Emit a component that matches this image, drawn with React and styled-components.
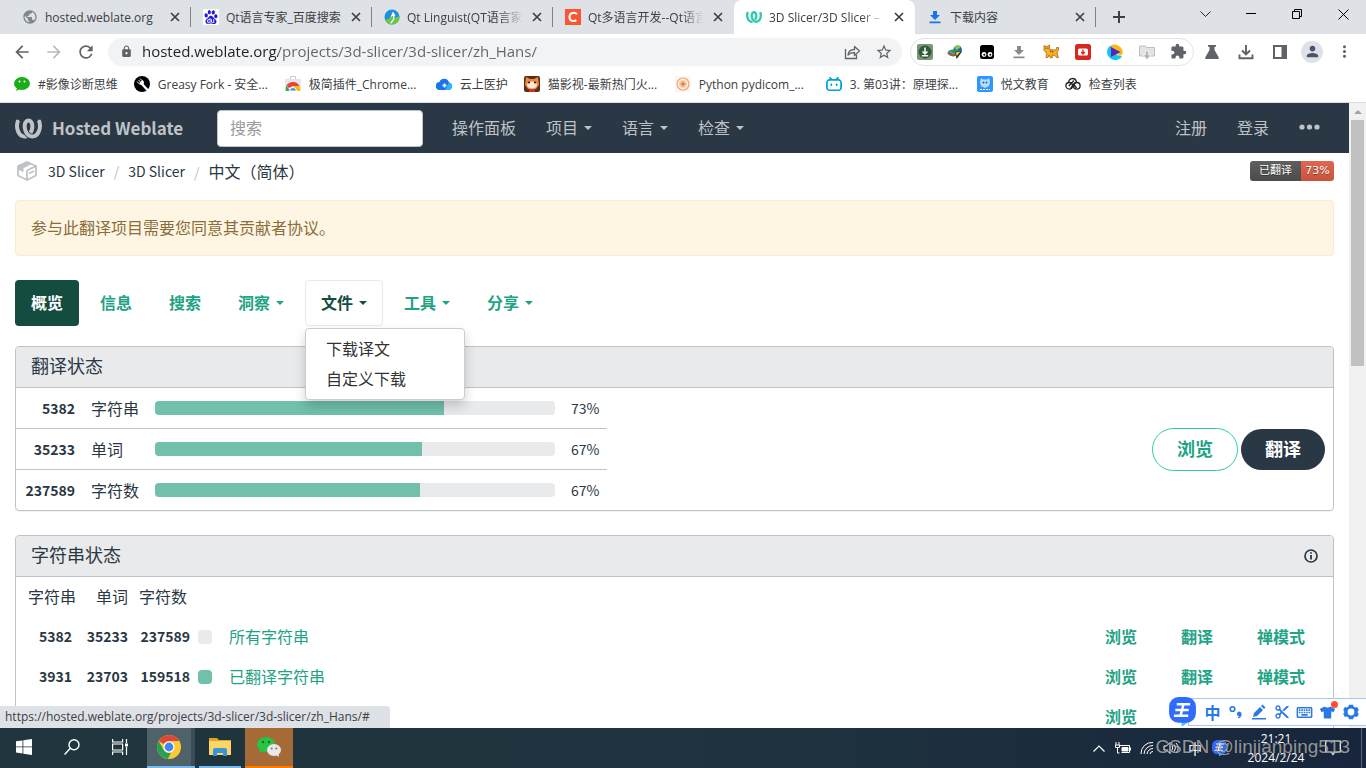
import styled, { createGlobalStyle, css } from "styled-components";
import {
  MdArrowBack,
  MdArrowForward,
  MdRefresh,
  MdLock,
  MdStarBorder,
  MdExtension,
  MdMoreVert,
  MdPerson,
  MdPublic,
  MdContentCut,
  MdOutlineKeyboard,
} from "react-icons/md";
import { FaTshirt } from "react-icons/fa";
import { SiBaidu, SiBilibili, SiWeblate } from "react-icons/si";

const GlobalStyle = createGlobalStyle`
  * {
    box-sizing: border-box;
  }
  body {
    margin: 0;
    overflow: hidden;
    font-family: "Noto Sans CJK SC", sans-serif;
    color: #2a3744;
    background: #fff;
  }
  button, input {
    font: inherit;
    color: inherit;
    border: 0;
    padding: 0;
    margin: 0;
    background: none;
  }
  button {
    cursor: pointer;
  }
  a {
    color: inherit;
    text-decoration: none;
  }
  svg {
    display: block;
    flex: none;
  }
`;

const Desktop = styled.div`
  height: 100vh;
  display: flex;
  flex-direction: column;
`;

/* ---------- browser chrome ---------- */

const Chrome = styled.header`
  font-family: "Open Sans", "Noto Sans CJK SC", sans-serif;
  font-size: 12px;
  color: #3c4043;
  border-bottom: 1px solid #d9dbde;
`;

const TabStrip = styled.div`
  height: 34px;
  padding-left: 10px;
  display: flex;
  background: #dee1e6;
`;

const Tab = styled.div`
  flex: 0 1 181px;
  min-width: 0;
  display: flex;
  align-items: center;
  padding: 0 8px 0 12px;
  position: relative;
  ${(props) =>
    props.$active
      ? css`
          background: #fff;
          border-radius: 8px 8px 0 0;
        `
      : css`
          &::after {
            content: "";
            position: absolute;
            right: 0;
            top: 7px;
            height: 20px;
            width: 1px;
            background: ${props.$last ? "transparent" : "#808387"};
          }
        `}
`;

const TabTitle = styled.button`
  flex: 1;
  min-width: 0;
  margin-left: 7px;
  text-align: left;
  white-space: nowrap;
  overflow: hidden;
  ${(props) =>
    props.$fade &&
    css`
      mask-image: linear-gradient(90deg, #000 80%, transparent);
    `}
`;

const TabClose = styled.button`
  width: 16px;
  height: 16px;
  margin-left: 6px;
  display: grid;
  place-items: center;
`;

const NewTab = styled.button`
  width: 46px;
  display: grid;
  place-items: center;
`;

const WindowButtons = styled.div`
  margin-left: auto;
  height: 28px;
  display: flex;
`;

const WindowButton = styled.button`
  width: 46px;
  display: grid;
  place-items: center;
`;

const Toolbar = styled.div`
  height: 35px;
  padding: 0 6px;
  display: flex;
  align-items: center;
  color: #5f6368;
`;

const ToolButton = styled.button`
  width: ${(props) => props.$width || 32}px;
  height: 28px;
  display: grid;
  place-items: center;
  color: ${(props) => (props.$dim ? "#b8babd" : "inherit")};
`;

const AddressBar = styled.div`
  flex: 1;
  height: 28px;
  margin: 0 8px 0 6px;
  padding: 0 2px 0 12px;
  display: flex;
  align-items: center;
  border-radius: 14px;
  background: #f1f3f4;
`;

const AddressInput = styled.input`
  flex: 1;
  min-width: 0;
  margin-left: 9px;
  height: 24px;
  padding-bottom: 1px;
  font-size: 15px;
  /* the host is darker than the path */
  color: transparent;
  background: linear-gradient(90deg, #202124 136px, #5f6368 136px);
  background-clip: text;
`;

const Extensions = styled.div`
  height: 28px;
  display: flex;
  align-items: center;
  border: 1px solid #e1e3e6;
  border-radius: 14px;
  margin-right: 2px;
  & > button {
    width: 32px;
  }
  & > button:first-child {
    width: 28px;
  }
  & > button:last-child {
    width: 30px;
  }
`;

const Avatar = styled.span`
  width: 22px;
  height: 22px;
  border-radius: 50%;
  background: #dee1e6;
  color: #47536b;
  display: grid;
  place-items: center;
`;

const Bookmarks = styled.nav`
  height: 33px;
  padding: 0 14px 3px;
  display: flex;
  align-items: center;
  gap: 16px;
`;

const Bookmark = styled.a`
  display: flex;
  align-items: center;
  gap: 8px;
  min-width: ${(props) => (props.$long ? "135px" : "0")};
  white-space: nowrap;
`;

/* ---------- page ---------- */

const Viewport = styled.div`
  flex: 1;
  min-height: 0;
  display: flex;
  position: relative;
  overflow: hidden;
`;

const Page = styled.div`
  flex: 1;
  min-width: 0;
  overflow: hidden;
  font-size: 16px;
  line-height: 24px;
`;

const Scrollbar = styled.div`
  width: 17px;
  padding: 0 2px;
  background: #f1f1f1;
`;

const ScrollArrow = styled.div`
  height: 17px;
  display: grid;
  place-items: center;
`;

const ScrollThumb = styled.div`
  height: 246px;
  background: #c1c1c1;
`;

const Navbar = styled.nav`
  height: 50px;
  padding: 0 15px;
  display: flex;
  align-items: center;
  background: #2a3744;
  color: #bfc3c7;
`;

const Brand = styled.a`
  display: flex;
  align-items: center;
  gap: 10px;
  width: 202px;
  font-size: 17px;
  font-weight: 700;
  white-space: nowrap;
`;

const SearchInput = styled.input`
  width: 206px;
  height: 37px;
  padding: 0 12px 3px;
  border: 1px solid #bfc3c7;
  border-radius: 4px;
  background: #fff;
  color: #2a3744;
  &::placeholder {
    color: #999;
    opacity: 1;
  }
`;

const NavLinks = styled.div`
  display: flex;
  align-items: center;
  gap: 30px;
  margin-left: ${(props) => (props.$right ? "auto" : "29px")};
  padding: ${(props) => (props.$right ? "0 14px 2px 0" : "0 0 2px")};
`;

const NavLink = styled.a`
  display: flex;
  align-items: center;
  white-space: nowrap;
`;

const Caret = styled.span`
  margin: 2px 0 0 6px;
  border: 4px solid transparent;
  border-top-color: currentColor;
  border-bottom: 0;
`;

const Crumbs = styled.div`
  height: 38px;
  margin: 0 15px;
  padding-bottom: 2px;
  display: flex;
  align-items: center;
`;

const CrumbList = styled.div`
  display: flex;
  align-items: center;
  margin-left: 10px;
  a + a::before {
    content: "/";
    padding: 0 9px;
    font-size: 14px;
    color: #bfc3c7;
  }
`;

const Crumb = styled.a`
  font-size: ${(props) => (props.$cjk ? 16 : 14)}px;
`;

const Badge = styled.a`
  margin-left: auto;
  height: 20px;
  display: flex;
  border-radius: 3px;
  overflow: hidden;
  font: 11px/20px "DejaVu Sans", "Noto Sans CJK SC", sans-serif;
  color: #fff;
  text-shadow: 0 1px 0 rgba(1, 1, 1, 0.4);
`;

const BadgeLabel = styled.span`
  width: 51px;
  text-align: center;
  background: linear-gradient(#5f5f5f, #4b4b4b);
`;

const BadgeValue = styled.span`
  width: 33px;
  text-align: center;
  background: linear-gradient(#e0674f, #c9533d);
`;

const Alert = styled.div`
  margin: 9px 15px 24px;
  padding: 14px 15px 16px;
  border: 1px solid #faebcc;
  border-radius: 4px;
  background: #fef6e3;
  color: #8a6d3b;
`;

const Pills = styled.div`
  margin: 0 15px 20px;
  display: flex;
  gap: 5px;
`;

const PillItem = styled.div`
  position: relative;
`;

const Pill = styled.button`
  height: 46px;
  padding: 0 15px 3px;
  display: flex;
  align-items: center;
  border: 1px solid transparent;
  border-radius: 4px;
  font-weight: 700;
  color: #1fa385;
  ${(props) =>
    props.$active &&
    css`
      background: #144d3f;
      color: #fff;
    `}
  ${(props) =>
    props.$open &&
    css`
      border-color: #e9eaec;
      color: #144d3f;
    `}
`;

const Menu = styled.div`
  position: absolute;
  z-index: 1;
  top: 100%;
  left: 0;
  margin-top: 2px;
  width: 160px;
  padding: 5px 0;
  border: 1px solid #ccc;
  border-radius: 4px;
  background: #fff;
  box-shadow: 0 6px 12px rgba(0, 0, 0, 0.18);
`;

const MenuItem = styled.a`
  display: block;
  padding: 2px 20px 4px;
  color: #333;
`;

const Panel = styled.section`
  margin: 0 15px 24px;
  border: 1px solid #bfc3c7;
  border-radius: 4px;
  box-shadow: 0 1px 1px rgba(0, 0, 0, 0.05);
`;

const PanelHeading = styled.div`
  height: 41px;
  padding: 0 15px;
  display: flex;
  align-items: center;
  justify-content: space-between;
  border-bottom: 1px solid #bfc3c7;
  border-radius: 3px 3px 0 0;
  background: #e9eaec;
`;

const PanelTitle = styled.h4`
  margin: 0;
  padding-bottom: 4px;
  font-size: 18px;
  font-weight: 400;
`;

const PanelBody = styled.div`
  display: flex;
  align-items: center;
  justify-content: space-between;
`;

const ProgressTable = styled.table`
  border-spacing: 0;
  td {
    height: 41px;
    padding: 0 8px 1px;
    white-space: nowrap;
  }
  tr:first-child td {
    height: 40px;
    padding-bottom: 0;
  }
  tr + tr td {
    border-top: 1px solid #bfc3c7;
  }
`;

const NumberCell = styled.td`
  width: 67px;
  font-size: 14px;
  font-weight: 700;
  text-align: right;
`;

const PercentCell = styled.td`
  font-size: 14px;
`;

const Progress = styled.div`
  width: 400px;
  height: 14px;
  border-radius: 4px;
  overflow: hidden;
  background: #e9eaec;
`;

const ProgressFill = styled.div`
  height: 100%;
  background: #70c0ac;
`;

const Actions = styled.div`
  display: flex;
  align-items: center;
  gap: 3px;
  padding-right: 8px;
`;

const ActionButton = styled.button`
  height: ${(props) => (props.$primary ? 41 : 43)}px;
  padding: 0 24px 3px;
  border-radius: 22px;
  font-size: 18px;
  font-weight: 700;
  ${(props) =>
    props.$primary
      ? css`
          background: #2a3744;
          color: #fff;
        `
      : css`
          border: 1px solid #2eccaa;
          color: #1fa385;
        `}
`;

const StringsTable = styled.table`
  width: 100%;
  table-layout: fixed;
  border-spacing: 0;
  th,
  td {
    height: 40px;
    padding: 0 0 2px;
    text-align: left;
    font-weight: 400;
    white-space: nowrap;
  }
  th:nth-child(-n + 3),
  td:nth-child(-n + 3) {
    text-align: right;
  }
  td:nth-child(-n + 3) {
    font-size: 14px;
    font-weight: 700;
  }
  td:first-child {
    padding-right: 4px;
  }
  th:nth-child(3) {
    padding-right: 3px;
  }
`;

const Swatch = styled.span`
  display: block;
  width: 14px;
  height: 14px;
  margin: 2px 0 0 8px;
  border-radius: 4px;
  background: ${(props) => (props.$filled ? "#70c0ac" : "#e9eaec")};
`;

const GreenLink = styled.a`
  color: #1fa385;
  font-weight: ${(props) => (props.$bold ? 700 : 400)};
`;

const StatusBubble = styled.div`
  position: absolute;
  left: 0;
  bottom: 0;
  height: 22px;
  min-width: 390px;
  padding: 0 8px 0 5px;
  border-radius: 0 4px 0 0;
  background: #dee1e6;
  color: #3c4043;
  font: 12px/22px "Open Sans", sans-serif;
`;

const ImeBar = styled.div`
  position: absolute;
  right: 0;
  bottom: 2px;
  height: 28px;
  width: 178px;
  padding-left: 12px;
  display: flex;
  align-items: center;
  border: 1px solid #a9c5f5;
  border-right: 0;
  background: #fff;
  color: #2878e6;
`;

const ImeButton = styled.button`
  width: 23px;
  display: grid;
  place-items: center;
  font-size: 16px;
  font-weight: 700;
  line-height: 20px;
  position: relative;
`;

const RedDot = styled.span`
  position: absolute;
  top: -4px;
  right: 1px;
  width: 7px;
  height: 7px;
  border-radius: 50%;
  background: #ff5030;
`;

const ImeLogo = styled.div`
  position: absolute;
  left: -20px;
  top: -2px;
`;

/* ---------- taskbar ---------- */

const Taskbar = styled.footer`
  height: 40px;
  display: flex;
  position: relative;
  background: linear-gradient(90deg, #20353e, #1f333e 55%, #18263d);
  color: #fff;
  font: 12px/19px "Open Sans", "Noto Sans CJK SC", sans-serif;
`;

const TaskApps = styled.div`
  display: flex;
  gap: 4px;
  padding-left: 3px;
`;

const TaskButton = styled.button`
  width: ${(props) => props.$width || 48}px;
  display: grid;
  place-items: center;
  background: ${(props) => props.$bg || "transparent"};
  border-bottom: 2px solid ${(props) => props.$line || "transparent"};
  ${(props) =>
    props.$stacked &&
    css`
      padding-right: 4px;
      box-shadow: inset -4px 0 #3a4d56;
    `}
`;

const Tray = styled.div`
  margin-left: auto;
  display: flex;
  align-items: center;
`;

const TrayItem = styled.button`
  width: 24px;
  height: 40px;
  display: grid;
  place-items: center;
  font-size: 14px;
`;

const Clock = styled.div`
  width: 90px;
  text-align: center;
`;

const ShowDesktop = styled.div`
  width: 5px;
  height: 40px;
  margin-left: 16px;
  border-left: 1px solid #5b6677;
`;

const Watermark = styled.div`
  position: absolute;
  right: 16px;
  top: 8px;
  font: 19px/22px "Liberation Sans", sans-serif;
  color: rgba(225, 225, 225, 0.65);
  text-shadow: 0 0 1px rgba(0, 0, 0, 0.6);
`;

/* ---------- icons ---------- */

const CloseIcon = () => (
  <svg width="10" height="10" viewBox="0 0 10 10" stroke="#3c4043" strokeWidth="1.7">
    <path d="M1 1l8 8M9 1l-8 8" />
  </svg>
);

const BaiduIcon = () => (
  <svg width="16" height="16" viewBox="0 0 16 16">
    <rect width="16" height="16" rx="1" fill="#fff" />
    <SiBaidu x="1" y="1" size={14} color="#2319dc" />
  </svg>
);

const LinguistIcon = () => (
  <svg width="16" height="16" viewBox="0 0 16 16">
    <circle cx="8" cy="8" r="7.5" fill="#1b8fe0" />
    <path d="M1 11C4 10 6 9 7 7l3 2 5.500-2c.5 5-3 8.500-7.500 8.500-3.500 0-6-2-7-4.500z" fill="#6cc644" />
    <path d="M6 14l3-4V7L6.500 8 9 2.500l2.500 4L10.500 7v3L7.500 14.500z" fill="#fff" />
  </svg>
);

const CIcon = () => (
  <svg width="16" height="16" viewBox="0 0 16 16">
    <rect width="16" height="16" fill="#fc5531" />
    <path d="M12 5.200C9.500 2.700 4.800 3.500 4.500 7.500c-.3 4.500 4.300 5.500 7 3.600" fill="none" stroke="#fff" strokeWidth="2" />
  </svg>
);

const WechatIcon = () => (
  <svg width="16" height="16" viewBox="0 0 16 16">
    <ellipse cx="8" cy="7.500" rx="8" ry="6.500" fill="#1aad19" />
    <path d="M3 12l-1 3 4-2z" fill="#1aad19" />
    <circle cx="5.500" cy="5.500" r="1" fill="#fff" />
    <circle cx="10.500" cy="5.500" r="1" fill="#fff" />
  </svg>
);

const GreasyIcon = () => (
  <svg width="16" height="16" viewBox="0 0 16 16">
    <circle cx="8" cy="8" r="8" fill="#000" />
    <path d="M8 8l5 5.500" stroke="#fff" strokeWidth="2.400" strokeLinecap="round" />
    <path d="M3 5.500l3 3M4.500 4l3 3M6 2.500l3 3" stroke="#fff" strokeWidth="1" fill="none" />
    <path d="M5 7.500l3.500-3.500 1.500 2-.5 2.500L7 9z" fill="#fff" />
  </svg>
);

const StoreIcon = () => (
  <svg width="16" height="16" viewBox="0 0 16 16">
    <path d="M5.500 3V.500h5V3" fill="none" stroke="#c9ccd0" />
    <path d="M0 3h16l-.5 12H.5z" fill="#e4e6e9" />
    <path d="M1.500 9.500A7.500 7.500 0 0 1 14.500 10H8l-4 2z" fill="#ea4335" />
    <path d="M1.500 9.500L5 15H.8c-.3-2 0-4 .7-5.500z" fill="#34a853" />
    <path d="M8.500 10h6c.7 1.500 1 3.300.7 5H9z" fill="#fbbc05" />
    <path d="M4.500 15a3.500 3.500 0 0 1 7 0z" fill="#4285f4" stroke="#fff" />
  </svg>
);

const CloudIcon = () => (
  <svg width="16" height="16" viewBox="0 0 16 16">
    <path d="M4 14a4 4 0 0 1-.5-8A5 5 0 0 1 13 6.500 3.800 3.800 0 0 1 12.500 14z" fill="#1a73e8" />
    <path d="M9 14l4-7.500a3.800 3.800 0 0 1-.5 7.500z" fill="#2fb5f5" />
    <path d="M8.500 7.500v4M6.500 9.500h4" stroke="#fff" strokeWidth="1.600" />
  </svg>
);

const CatIcon = () => (
  <svg width="16" height="16" viewBox="0 0 16 16">
    <rect width="16" height="16" rx="2" fill="#5b2c1c" />
    <path d="M2 1l4 2h4l4-2 1 8-3 4H4L1 9z" fill="#e98b47" />
    <ellipse cx="8" cy="9" rx="5" ry="3.500" fill="#ffe9cf" />
    <circle cx="5" cy="6.500" r="1.100" fill="#301a10" />
    <circle cx="11" cy="6.500" r="1.100" fill="#301a10" />
    <path d="M5 13h6v3H5z" fill="#c8362a" />
  </svg>
);

const PyIcon = () => (
  <svg width="16" height="16" viewBox="0 0 16 16">
    <rect width="16" height="16" fill="#faf6f2" />
    <circle cx="8" cy="8" r="6" fill="none" stroke="#f2a36b" strokeWidth="1.200" />
    <circle cx="8" cy="8" r="4" fill="#f8c9a4" />
    <path d="M8 5l1 2 2 1-2 1-1 2-1-2-2-1 2-1z" fill="#ec7f37" />
  </svg>
);

const YuewenIcon = () => (
  <svg width="16" height="16" viewBox="0 0 16 16">
    <rect width="16" height="16" rx="2" fill="#2d96ff" />
    <path d="M4 2l2 1.500h4L12 2l1 4-1 4-4 2-4-2-1-4z" fill="#b9defc" />
    <circle cx="6.500" cy="6.500" r="1" fill="#1560b0" />
    <circle cx="9.500" cy="6.500" r="1" fill="#1560b0" />
    <path d="M3 13.500h10" stroke="#fff" strokeDasharray="2 1" />
  </svg>
);

const ListIcon = () => (
  <svg width="16" height="16" viewBox="0 0 16 16" fill="none" stroke="#222" strokeWidth="1.300">
    <circle cx="4.200" cy="9.800" r="3.300" />
    <circle cx="11.800" cy="9.800" r="3.300" />
    <path d="M3.500 6.500C4 1.500 10.500 1 11.500 6.200M5.500 12.500l5-6M3.800 10l5-5.500M8.500 8l3 4" />
  </svg>
);

const ShareIcon = () => (
  <svg width="17" height="16" viewBox="0 0 17 16" fill="none" stroke="#5f6368" strokeWidth="1.300">
    <path d="M1.500 5v9.500h11V11" />
    <path d="M4 11c.5-4 3-5.500 6.500-5.500V2.500L15.500 7l-5 4.500v-3C8 8.500 6 9 4 11z" strokeLinejoin="round" />
  </svg>
);

const GreenSaveIcon = () => (
  <svg width="16" height="16" viewBox="0 0 16 16">
    <rect width="16" height="16" rx="2" fill="#7d9573" />
    <circle cx="8" cy="8" r="6.500" fill="#2d5b3f" />
    <path d="M8 3.500v6M5.500 7.500L8 10l2.500-2.500M4.800 11.800h6.400" stroke="#fff" strokeWidth="1.500" fill="none" />
  </svg>
);

const IdmIcon = () => (
  <svg width="16" height="14" viewBox="0 0 18 16">
    <circle cx="12" cy="5.500" r="5" fill="#2c63b6" />
    <path d="M8 3c2-3 6-3 8-1l-5 4z" fill="#7ec850" />
    <ellipse cx="7" cy="9" rx="6.500" ry="4" fill="#2f9a48" />
    <path d="M1 8l5 4 4-2" stroke="#e3372c" strokeWidth="1.500" fill="none" />
    <path d="M2 6.500l5 3.500 3-2" stroke="#4a9be8" strokeWidth="1.500" fill="none" />
    <path d="M9 7.500h8L11 16c-1-2-1-5-2-8.500z" fill="#28343c" />
    <path d="M10 8.500l5-1-4 5z" fill="#ffd928" />
  </svg>
);

const TamperIcon = () => (
  <svg width="14" height="14" viewBox="0 0 14 14">
    <rect width="14" height="14" rx="2.500" fill="#000" />
    <circle cx="4" cy="9.500" r="2.400" fill="#fff" />
    <circle cx="10" cy="9.500" r="2.400" fill="#fff" />
    <circle cx="4.300" cy="9.800" r="1" />
    <circle cx="10.300" cy="9.800" r="1" />
  </svg>
);

const BlockArrowIcon = ({ color }) => (
  <svg width="16" height="16" viewBox="0 0 16 16" fill={color}>
    <path d="M6 2h4v4h3L8 11 3 6h3zM2.500 12.500h11v1.700h-11z" />
  </svg>
);

const TigerIcon = () => (
  <svg width="16" height="16" viewBox="0 0 16 16">
    <path d="M1 1.500l1.500.8h2L6.500 1v4.500l5.500.5 1.500-1V3.500h2V6l-1.500 2 .5 3 1 2.500h-2L12 11.500l-3-.5.5 2.500-2 .5-1.500-3-1 2.500H3L3.500 9 1 6.500z" fill="#f7b21d" stroke="#a8560c" strokeWidth=".7" />
    <path d="M2.500 4.200h1M4.500 4.200h1M8 6.500L7.500 8M10 7l-.5 1.500" stroke="#7a2c08" />
  </svg>
);

const RedDownIcon = () => (
  <svg width="16" height="16" viewBox="0 0 16 16">
    <rect width="16" height="16" rx="2.500" fill="#d7271f" />
    <rect x="3" y="4.500" width="10" height="7" rx="1.500" fill="#fff" />
    <path d="M8 5.500v3.500M6.200 8L8 10l1.800-2" stroke="#d7271f" strokeWidth="1.400" fill="none" />
  </svg>
);

const PlayIcon = () => (
  <svg width="16" height="16" viewBox="0 0 16 16">
    <path d="M4 1.500A8 8 0 0 1 15.500 10L13 12 4 5z" fill="#fdb913" />
    <path d="M3.500 1.500a8 8 0 0 0 7.500 14c1.500-.5 3-1.500 4-3l-5-1.500z" fill="#12c5f0" />
    <path d="M4 3l9.500 5L4 13z" fill="#5a25b5" />
  </svg>
);

const FolderDownIcon = () => (
  <svg width="16" height="16" viewBox="0 0 16 16">
    <path d="M.5 2h6l1 1.500h8V12H.5z" fill="#e2e3e5" stroke="#bcbec1" />
    <path d="M6.500 7h3v4h2.500l-4 4.500-4-4.500h2.500z" fill="#b1b3b6" stroke="#fff" strokeWidth=".6" />
  </svg>
);

const FlaskIcon = () => (
  <svg width="14" height="14" viewBox="0 0 14 14" fill="#5f6368">
    <path d="M3 0h8v1.700H9.500V5l4.300 7.500q.4 1.500-1 1.500H1.200q-1.400 0-1-1.500L4.500 5V1.700H3z" />
  </svg>
);

const TrayDownIcon = () => (
  <svg width="16" height="16" viewBox="0 0 16 16" fill="none" stroke="#5f6368" strokeWidth="1.900">
    <path d="M8 1v9M4 6.500L8 10.500l4-4M1.500 10.500v3.800h13v-3.800" />
  </svg>
);

const WindowsIcon = () => (
  <svg width="16" height="16" viewBox="0 0 16 16" fill="#fff">
    <path d="M0 2.300l6.500-.9v6.100H0zM7.300 1.300L16 0v7.500H7.300zM0 8.300h6.500v6.100L0 13.500zM7.300 8.300H16V16l-8.700-1.300z" />
  </svg>
);

const FindIcon = () => (
  <svg width="16" height="16" viewBox="0 0 16 16" fill="none" stroke="#fff" strokeWidth="1.400">
    <circle cx="10" cy="5.800" r="5" />
    <path d="M6.300 9.300L.6 15.500" />
  </svg>
);

const TaskViewIcon = () => (
  <svg width="17" height="16" viewBox="0 0 17 16" fill="none" stroke="#fff" strokeWidth="1.200">
    <path d="M.6 0v3h10V0M.6 16v-3h10v3M.6 5h10v6H.6zM14.500 0v4M14.500 8v8" />
    <path d="M13 4.500h3v3h-3z" fill="#fff" stroke="none" />
  </svg>
);

const ChromeIcon = () => (
  <svg width="24" height="24" viewBox="0 0 24 24">
    <circle cx="12" cy="12" r="12" fill="#fbc934" />
    <path d="M12 0a12 12 0 0 1 10.400 6H12a6 6 0 0 0-5.200 3L1.600 6A12 12 0 0 1 12 0z" fill="#e0453a" />
    <path d="M1.600 6l5.200 9A6 6 0 0 0 12 18l2-.3-3.200 6.200A12 12 0 0 1 1.600 6z" fill="#27a052" />
    <circle cx="12" cy="12" r="5.600" fill="#fff" />
    <circle cx="12" cy="12" r="4.400" fill="#4285f4" />
  </svg>
);

const ExplorerIcon = () => (
  <svg width="22" height="20" viewBox="0 0 22 20">
    <path d="M0 1h8l2 2h12v15H0z" fill="#e0a526" />
    <path d="M0 4h22v14H0z" fill="#fcd768" />
    <path d="M4 19v-6q0-2 2-2h10q2 0 2 2v6h-4v-3H8v3z" fill="#3a94d8" />
  </svg>
);

const WechatTaskIcon = () => (
  <svg width="24" height="20" viewBox="0 0 24 20">
    <ellipse cx="9" cy="7.500" rx="9" ry="7.500" fill="#28c445" />
    <path d="M3 12l-.5 4 4-2z" fill="#28c445" />
    <circle cx="6" cy="5" r="1.200" fill="#17702b" />
    <circle cx="12" cy="5" r="1.200" fill="#17702b" />
    <ellipse cx="17" cy="13" rx="7" ry="6" fill="#e9e9e9" />
    <path d="M19 18l3 2-.5-3z" fill="#e9e9e9" />
    <circle cx="14.700" cy="11.500" r="1" fill="#777" />
    <circle cx="19.300" cy="11.500" r="1" fill="#777" />
  </svg>
);

const CubeIcon = () => (
  <svg width="23" height="22" viewBox="-1 0 23 22" fill="none" stroke="#bfc3c7" strokeWidth="1.800" strokeLinejoin="round">
    <path d="M11 2l9 4v9.500L11 20l-9-4.500V6zM11 10.500V20M20 6l-9 4.500" />
    <path d="M2 6l9-4 4 1.800L7 8v3.500L2 9z" fill="#bfc3c7" strokeWidth="1" />
    <path d="M13 13.500l5-2.500" />
  </svg>
);

const InfoIcon = () => (
  <svg width="14" height="14" viewBox="0 0 14 14">
    <circle cx="7" cy="7" r="6" fill="none" stroke="#2a3744" strokeWidth="1.700" />
    <path d="M7 3.200v1.600M7 6v4.600" stroke="#2a3744" strokeWidth="1.800" />
  </svg>
);

const ImeLogoIcon = ({ size }) => (
  <svg width={size} height={size * 1.1} viewBox="0 0 28 31">
    <path d="M8 24h15l-9 6.500q-1 .5-1-1V26z" fill="#42c8ff" />
    <rect width="28" height="27" rx="10" fill="#2f6bff" />
    <path d="M8 7.500h14M6.500 13.500h14M5 19.500h15M15 7.500l-3 12" stroke="#fff" strokeWidth="2.600" fill="none" />
  </svg>
);

const ImePenIcon = () => (
  <svg width="16" height="16" viewBox="0 0 16 16" fill="#2878e6">
    <path d="M3 9l6-6 3 3-6 6-4 1zM10 2l1.500-1.500 3 3L13 5zM1 14h14v1.600H1z" />
  </svg>
);

const ImeGearIcon = () => (
  <svg width="16" height="16" viewBox="0 0 16 16" fill="#2878e6">
    <path
      fillRule="evenodd"
      d="M6 .8h4l.8 1.900 1.200.7 2.100-.3 1.700 3L14.500 8l1.300 1.900-1.700 3-2.100-.3-1.200.7L10 15.200H6l-.8-1.900-1.200-.7-2.100.3-1.700-3L1.500 8 .2 6.100l1.700-3 2.100.3 1.200-.7zM8 4.600a3.400 3.400 0 1 0 0 6.800 3.400 3.400 0 0 0 0-6.800z"
    />
  </svg>
);

const BatteryIcon = () => (
  <svg width="16" height="14" viewBox="0 0 16 14" fill="none" stroke="#fff">
    <path d="M4.500 4.500h10v7h-8M15.500 6.500v3" />
    <path d="M7 6.500h6v3.500H7z" fill="#fff" />
    <path d="M1 1v3M4 1v3M.5 4h4v2.500h-4zM2.500 7v5h2" />
  </svg>
);

const WifiIcon = () => (
  <svg width="14" height="14" viewBox="0 0 14 14" fill="none" stroke="#fff">
    <path d="M1 13A11 11 0 0 1 13 1.500M4 13a9 9 0 0 1 9-8.500M7 13a6 6 0 0 1 6-5.500M10 13a3 3 0 0 1 3-2.500" />
  </svg>
);

const SpeakerIcon = () => (
  <svg width="16" height="14" viewBox="0 0 16 14" fill="none" stroke="#fff">
    <path d="M1 5h2.500L7 1.500v11L3.500 9H1zM9 5q1.500 2 0 4M11 3.500q3 3.500 0 7M13 2q4.500 5 0 10" />
  </svg>
);

const ChatIcon = () => (
  <svg width="16" height="16" viewBox="0 0 16 16" fill="none" stroke="#fff" strokeWidth="1.200">
    <path d="M.7 1h14.600v11H10l-2 2.500L6 12H.7z" />
  </svg>
);

/* ---------- data ---------- */

const tabs = [
  { title: "hosted.weblate.org", icon: <MdPublic size={16} color="#80868b" /> },
  { title: "Qt语言专家_百度搜索", icon: <BaiduIcon /> },
  { title: "Qt Linguist(QT语言家", icon: <LinguistIcon />, fade: true },
  { title: "Qt多语言开发--Qt语言", icon: <CIcon />, fade: true, last: true },
  {
    title: "3D Slicer/3D Slicer –",
    icon: <SiWeblate size={16} color="#2eccaa" />,
    fade: true,
    active: true,
  },
  { title: "下载内容", icon: <BlockArrowIcon color="#1a73e8" /> },
];

const extensions = [
  ["保存", <GreenSaveIcon />],
  ["IDM", <IdmIcon />],
  ["脚本", <TamperIcon />],
  ["下载", <BlockArrowIcon color="#8a8a8a" />],
  ["猫抓", <TigerIcon />],
  ["视频下载", <RedDownIcon />],
  ["播放器", <PlayIcon />],
  ["文件夹", <FolderDownIcon />],
  ["扩展程序", <MdExtension size={17} />],
];

const bookmarks = [
  ["#影像诊断思维", <WechatIcon />],
  ["Greasy Fork - 安全...", <GreasyIcon />],
  ["极简插件_Chrome...", <StoreIcon />],
  ["云上医护", <CloudIcon />],
  ["猫影视-最新热门火...", <CatIcon />],
  ["Python pydicom_...", <PyIcon />],
  ["3. 第03讲：原理探...", <SiBilibili size={16} color="#00a1d6" />],
  ["悦文教育", <YuewenIcon />],
  ["检查列表", <ListIcon />],
];

const pills = [
  { label: "概览", active: true },
  { label: "信息" },
  { label: "搜索" },
  { label: "洞察", caret: true },
  { label: "文件", caret: true, menu: ["下载译文", "自定义下载"] },
  { label: "工具", caret: true },
  { label: "分享", caret: true },
];

const progress = [
  { count: 5382, label: "字符串", percent: 73, bar: 72.3 },
  { count: 35233, label: "单词", percent: 67, bar: 66.8 },
  { count: 237589, label: "字符数", percent: 67, bar: 66.3 },
];

const strings = [
  { counts: [5382, 35233, 237589], label: "所有字符串", links: ["浏览", "翻译", "禅模式"] },
  {
    counts: [3931, 23703, 159518],
    label: "已翻译字符串",
    filled: true,
    links: ["浏览", "翻译", "禅模式"],
  },
  { counts: ["", "", ""], label: "", links: ["浏览"] },
];

/* ---------- sections ---------- */

function BrowserChrome() {
  return (
    <Chrome>
      <TabStrip>
        {tabs.map((tab) => (
          <Tab key={tab.title} $active={tab.active} $last={tab.last}>
            {tab.icon}
            <TabTitle $fade={tab.fade}>{tab.title}</TabTitle>
            <TabClose aria-label="关闭">
              <CloseIcon />
            </TabClose>
          </Tab>
        ))}
        <NewTab aria-label="新标签页">
          <svg width="12" height="12" viewBox="0 0 12 12" stroke="#3c4043" strokeWidth="2">
            <path d="M6 0v12M0 6h12" />
          </svg>
        </NewTab>
        <WindowButtons>
          <WindowButton aria-label="搜索标签页">
            <svg width="11" height="7" viewBox="0 0 11 7" fill="none" stroke="#222">
              <path d="M.5.500l5 5 5-5" />
            </svg>
          </WindowButton>
          <WindowButton aria-label="最小化">
            <svg width="10" height="2" viewBox="0 0 10 2">
              <path d="M0 0h10v1H0z" />
            </svg>
          </WindowButton>
          <WindowButton aria-label="还原">
            <svg width="10" height="10" viewBox="0 0 10 10" fill="none" stroke="#000">
              <path d="M.5 2.500h7v7h-7zM2.500 2.500v-2h7v7h-2" />
            </svg>
          </WindowButton>
          <WindowButton aria-label="关闭窗口">
            <svg width="11" height="11" viewBox="0 0 11 11" stroke="#000">
              <path d="M.5.500l10 10M10.500.500l-10 10" />
            </svg>
          </WindowButton>
        </WindowButtons>
      </TabStrip>
      <Toolbar>
        <ToolButton aria-label="后退">
          <MdArrowBack size={20} />
        </ToolButton>
        <ToolButton aria-label="前进" $dim>
          <MdArrowForward size={20} />
        </ToolButton>
        <ToolButton aria-label="刷新">
          <MdRefresh size={20} />
        </ToolButton>
        <AddressBar>
          <MdLock size={13} />
          <AddressInput
            aria-label="地址"
            defaultValue="hosted.weblate.org/projects/3d-slicer/3d-slicer/zh_Hans/"
          />
          <ToolButton aria-label="分享">
            <ShareIcon />
          </ToolButton>
          <ToolButton aria-label="收藏">
            <MdStarBorder size={18} />
          </ToolButton>
        </AddressBar>
        <Extensions>
          {extensions.map(([name, icon]) => (
            <ToolButton key={name} aria-label={name}>
              {icon}
            </ToolButton>
          ))}
        </Extensions>
        <ToolButton aria-label="实验室">
          <FlaskIcon />
        </ToolButton>
        <ToolButton aria-label="下载" $width={36}>
          <TrayDownIcon />
        </ToolButton>
        <ToolButton aria-label="侧边栏">
          <svg width="14" height="14" viewBox="0 0 14 14">
            <path d="M1 1h12v12H1z" fill="none" stroke="#5f6368" strokeWidth="2" />
            <path d="M8.500 1H13v12H8.500z" fill="#5f6368" />
          </svg>
        </ToolButton>
        <ToolButton aria-label="个人资料">
          <Avatar>
            <MdPerson size={17} />
          </Avatar>
        </ToolButton>
        <ToolButton aria-label="菜单">
          <MdMoreVert size={19} />
        </ToolButton>
      </Toolbar>
      <Bookmarks>
        {bookmarks.map(([name, icon]) => (
          <Bookmark key={name} href="#" $long={name.endsWith("...")}>
            {icon}
            {name}
          </Bookmark>
        ))}
      </Bookmarks>
    </Chrome>
  );
}

function SiteNav() {
  return (
    <Navbar>
      <Brand href="#">
        <SiWeblate size={27} />
        Hosted Weblate
      </Brand>
      <SearchInput aria-label="搜索" placeholder="搜索" />
      <NavLinks>
        <NavLink href="#">操作面板</NavLink>
        {["项目", "语言", "检查"].map((label) => (
          <NavLink key={label} href="#">
            {label}
            <Caret />
          </NavLink>
        ))}
      </NavLinks>
      <NavLinks $right>
        <NavLink href="#">注册</NavLink>
        <NavLink href="#">登录</NavLink>
        <NavLink href="#" aria-label="更多">
          <svg width="21" height="6" viewBox="0 0 21 6" fill="currentColor">
            <circle cx="3" cy="3" r="2.600" />
            <circle cx="10.500" cy="3" r="2.600" />
            <circle cx="18" cy="3" r="2.600" />
          </svg>
        </NavLink>
      </NavLinks>
    </Navbar>
  );
}

function ContextMenu({ items }) {
  return (
    <Menu>
      {items.map((item) => (
        <MenuItem key={item} href="#">
          {item}
        </MenuItem>
      ))}
    </Menu>
  );
}

function Translation() {
  return (
    <Page>
      <SiteNav />
      <Crumbs>
        <CubeIcon />
        <CrumbList>
          <Crumb href="#">3D Slicer</Crumb>
          <Crumb href="#">3D Slicer</Crumb>
          <Crumb href="#" $cjk>
            中文（简体）
          </Crumb>
        </CrumbList>
        <Badge href="#">
          <BadgeLabel>已翻译</BadgeLabel>
          <BadgeValue>73%</BadgeValue>
        </Badge>
      </Crumbs>
      <Alert>参与此翻译项目需要您同意其贡献者协议。</Alert>
      <Pills>
        {pills.map((pill) => (
          <PillItem key={pill.label}>
            <Pill $active={pill.active} $open={Boolean(pill.menu)}>
              {pill.label}
              {pill.caret && <Caret />}
            </Pill>
            {pill.menu && <ContextMenu items={pill.menu} />}
          </PillItem>
        ))}
      </Pills>
      <Panel>
        <PanelHeading>
          <PanelTitle>翻译状态</PanelTitle>
        </PanelHeading>
        <PanelBody>
          <ProgressTable>
            <tbody>
              {progress.map((row) => (
                <tr key={row.label}>
                  <NumberCell>{row.count}</NumberCell>
                  <td>{row.label}</td>
                  <td>
                    <Progress>
                      <ProgressFill style={{ width: `${row.bar}%` }} />
                    </Progress>
                  </td>
                  <PercentCell>{row.percent}%</PercentCell>
                </tr>
              ))}
            </tbody>
          </ProgressTable>
          <Actions>
            <ActionButton>浏览</ActionButton>
            <ActionButton $primary>翻译</ActionButton>
          </Actions>
        </PanelBody>
      </Panel>
      <Panel>
        <PanelHeading>
          <PanelTitle>字符串状态</PanelTitle>
          <a href="#" aria-label="文档">
            <InfoIcon />
          </a>
        </PanelHeading>
        <StringsTable>
          <colgroup>
            <col width="60" />
            <col width="52" />
            <col width="62" />
            <col width="39" />
            <col />
            <col width="76" />
            <col width="76" />
            <col width="76" />
          </colgroup>
          <thead>
            <tr>
              <th>字符串</th>
              <th>单词</th>
              <th>字符数</th>
              <th colSpan={5} />
            </tr>
          </thead>
          <tbody>
            {strings.map((row) => (
              <tr key={row.label}>
                {row.counts.map((count, i) => (
                  <td key={i}>{count}</td>
                ))}
                <td>{row.label && <Swatch $filled={row.filled} />}</td>
                <td>
                  <GreenLink href="#">{row.label}</GreenLink>
                </td>
                {row.links.map((link) => (
                  <td key={link}>
                    <GreenLink href="#" $bold>
                      {link}
                    </GreenLink>
                  </td>
                ))}
              </tr>
            ))}
          </tbody>
        </StringsTable>
      </Panel>
    </Page>
  );
}

function InputMethod() {
  return (
    <ImeBar>
      <ImeLogo>
        <ImeLogoIcon size={27} />
      </ImeLogo>
      <ImeButton>中</ImeButton>
      <ImeButton aria-label="标点">
        <svg width="14" height="14" viewBox="0 0 14 14">
          <circle cx="3.500" cy="4" r="2.300" fill="none" stroke="#2878e6" strokeWidth="1.600" />
          <path d="M8 8.500a2.200 2.200 0 1 1 4.500.8c0 2-1 3.500-3 4.200l-.5-1 1.200-1.500A2.200 2.200 0 0 1 8 8.500z" fill="#2878e6" />
        </svg>
      </ImeButton>
      <ImeButton aria-label="手写">
        <ImePenIcon />
      </ImeButton>
      <ImeButton aria-label="截图">
        <MdContentCut size={16} />
      </ImeButton>
      <ImeButton aria-label="键盘">
        <MdOutlineKeyboard size={19} />
      </ImeButton>
      <ImeButton aria-label="皮肤">
        <FaTshirt size={15} />
        <RedDot />
      </ImeButton>
      <ImeButton aria-label="设置">
        <ImeGearIcon />
      </ImeButton>
    </ImeBar>
  );
}

function SystemBar() {
  return (
    <Taskbar>
      <TaskButton aria-label="开始">
        <WindowsIcon />
      </TaskButton>
      <TaskButton aria-label="搜索">
        <FindIcon />
      </TaskButton>
      <TaskButton aria-label="任务视图">
        <TaskViewIcon />
      </TaskButton>
      <TaskApps>
        <TaskButton aria-label="Chrome" $bg="#4f626a" $line="#76b9ed" $stacked>
          <ChromeIcon />
        </TaskButton>
        <TaskButton aria-label="资源管理器" $width={42} $line="#76b9ed">
          <ExplorerIcon />
        </TaskButton>
        <TaskButton aria-label="微信" $bg="#a66a36" $line="#ff7b00">
          <WechatTaskIcon />
        </TaskButton>
      </TaskApps>
      <Tray>
        <TrayItem aria-label="显示隐藏的图标">
          <svg width="12" height="7" viewBox="0 0 12 7" fill="none" stroke="#fff" strokeWidth="1.200">
            <path d="M.5 6.500L6 1l5.500 5.500" />
          </svg>
        </TrayItem>
        <TrayItem aria-label="电源">
          <BatteryIcon />
        </TrayItem>
        <TrayItem aria-label="网络">
          <WifiIcon />
        </TrayItem>
        <TrayItem aria-label="音量">
          <SpeakerIcon />
        </TrayItem>
        <TrayItem>中</TrayItem>
        <TrayItem aria-label="输入法">
          <ImeLogoIcon size={15} />
        </TrayItem>
        <Clock>
          21:21
          <br />
          2024/2/24
        </Clock>
        <TrayItem aria-label="通知">
          <ChatIcon />
        </TrayItem>
        <ShowDesktop />
      </Tray>
      <Watermark>CSDN @linjianping513</Watermark>
    </Taskbar>
  );
}

export default function App() {
  return (
    <Desktop>
      <GlobalStyle />
      <BrowserChrome />
      <Viewport>
        <Translation />
        <Scrollbar>
          <ScrollArrow>
            <svg width="8" height="4" viewBox="0 0 8 4" fill="#a3a3a3">
              <path d="M4 0l4 4H0z" />
            </svg>
          </ScrollArrow>
          <ScrollThumb />
        </Scrollbar>
        <StatusBubble>https://hosted.weblate.org/projects/3d-slicer/3d-slicer/zh_Hans/#</StatusBubble>
        <InputMethod />
      </Viewport>
      <SystemBar />
    </Desktop>
  );
}
